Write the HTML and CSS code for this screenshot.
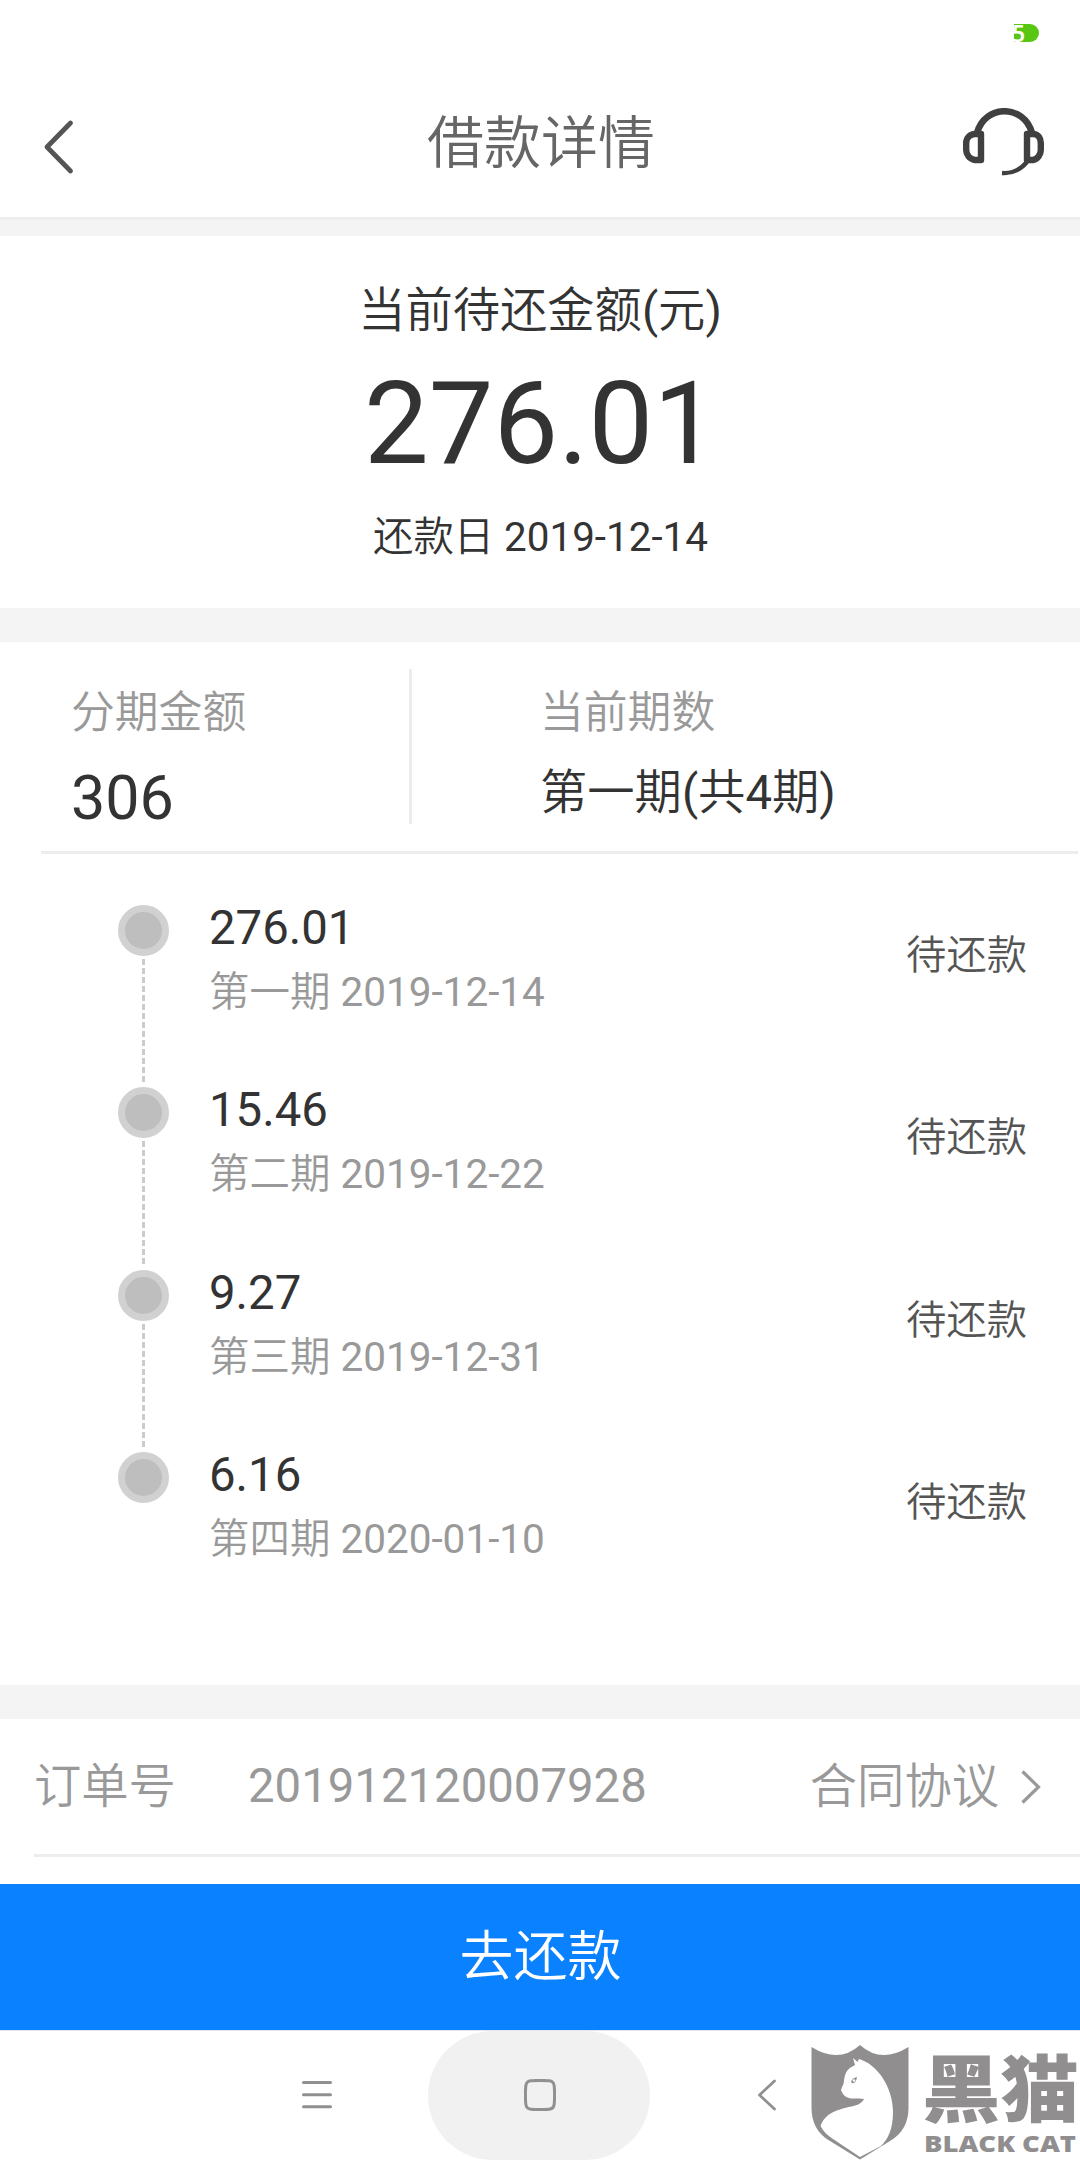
FILE: index.html
```
<!DOCTYPE html>
<html lang="zh-CN">

<head>
    <meta charset="UTF-8">
    <meta name="viewport" content="width=device-width, initial-scale=1.0">
    <title>借款详情</title>
    <link rel="stylesheet" href="styles.css">
</head>

<body>
    <div class="status-bar">
        <span class="battery">5</span>
    </div>

    <header class="header">
        <a href="#" class="back-link">
            <svg width="32" height="56" viewBox="0 0 32 56">
                <path d="M28.5 4 L5 28 L28.5 52" fill="none" stroke="#555" stroke-width="4.8" stroke-linecap="round" stroke-linejoin="round" />
            </svg>
        </a>
        <h1>借款详情</h1>
        <a href="#" class="service-link">
            <svg width="82" height="68" viewBox="0 0 82 68" fill="none" stroke="#404040">
                <path d="M14 25 C22 -4 61 -4 69 25" stroke-width="6.6" />
                <path d="M18 26 V52 H12 C6 51 3.2 46 3.2 42 V35 C3.2 30 7 26 12 26 Z" stroke-width="6.4" stroke-linejoin="round" />
                <path d="M64 26 V52 H70 C75 51 77.8 46 77.8 42 V35 C77.8 30 75 26 70 26 Z" stroke-width="6.4" stroke-linejoin="round" />
                <path d="M64 54 C57 62 49 66 39 65" stroke-width="4.4" />
            </svg>
        </a>
    </header>

    <section class="summary">
        <p class="summary-label">当前待还金额<span class="num">(</span>元<span class="num">)</span></p>
        <p class="summary-amount">276.01</p>
        <p class="summary-date">还款日 <span class="num">2019-12-14</span></p>
    </section>

    <section class="plan">
        <div class="plan-info">
            <div class="plan-total">
                <p class="plan-label">分期金额</p>
                <p class="plan-number">306</p>
            </div>
            <div class="plan-current">
                <p class="plan-label">当前期数</p>
                <p class="plan-value">第一期<span class="num">(</span>共<span class="num">4</span>期<span class="num">)</span></p>
            </div>
        </div>

        <ul class="timeline">
            <li class="timeline-item">
                <div class="marker"><i class="dot"></i><i class="dash"></i></div>
                <div class="detail">
                    <p class="amount">276.01</p>
                    <p class="date">第一期 <span class="num">2019-12-14</span></p>
                </div>
                <span class="state">待还款</span>
            </li>
            <li class="timeline-item">
                <div class="marker"><i class="dot"></i><i class="dash"></i></div>
                <div class="detail">
                    <p class="amount">15.46</p>
                    <p class="date">第二期 <span class="num">2019-12-22</span></p>
                </div>
                <span class="state">待还款</span>
            </li>
            <li class="timeline-item">
                <div class="marker"><i class="dot"></i><i class="dash"></i></div>
                <div class="detail">
                    <p class="amount">9.27</p>
                    <p class="date">第三期 <span class="num">2019-12-31</span></p>
                </div>
                <span class="state">待还款</span>
            </li>
            <li class="timeline-item">
                <div class="marker"><i class="dot"></i></div>
                <div class="detail">
                    <p class="amount">6.16</p>
                    <p class="date">第四期 <span class="num">2020-01-10</span></p>
                </div>
                <span class="state">待还款</span>
            </li>
        </ul>
    </section>

    <section class="order">
        <div class="order-row">
            <span class="order-label">订单号</span>
            <span class="order-number">201912120007928</span>
            <a href="#" class="contract">合同协议
                <svg width="20" height="34" viewBox="0 0 20 34">
                    <path d="M1.5 1.5 L17.5 17 L1.5 32.5" fill="none" stroke="#999" stroke-width="3.2" />
                </svg>
            </a>
        </div>
    </section>

    <button class="pay-btn">去还款</button>

    <nav class="system-nav">
        <span class="nav-key">
            <svg width="30" height="28" viewBox="0 0 30 28">
                <path d="M1.5 1.5 H28.5 M1.5 13.7 H28.5 M1.5 25.7 H28.5" stroke="#909090" stroke-width="3" stroke-linecap="round" />
            </svg>
        </span>
        <span class="nav-key home">
            <svg width="32" height="32" viewBox="0 0 32 32">
                <path d="M7 1.8 Q16 1 25 1.8 Q29.8 2.2 30.2 7 Q31 16 30.2 25 Q29.8 29.8 25 30.2 Q16 31 7 30.2 Q2.2 29.8 1.8 25 Q1 16 1.8 7 Q2.2 2.2 7 1.8 Z" fill="none" stroke="#909090" stroke-width="3" />
            </svg>
        </span>
        <span class="nav-key back">
            <svg width="20" height="32" viewBox="0 0 20 32">
                <path d="M17.5 2 L2.5 16 L17.5 30" fill="none" stroke="#909090" stroke-width="2.8" stroke-linecap="round" stroke-linejoin="round" />
            </svg>
        </span>
    </nav>

    <div class="watermark">
        <svg width="98" height="115" viewBox="0 0 98 115">
            <!-- shield -->
            <path d="M0.5 2 Q28 19 49 0 Q70 19 97.5 2 V63 C97.5 78 91 89 79 96 L49 114.5 L19 96 C7 89 0.5 78 0.5 63 Z" fill="#918e8f" />
            <!-- cat -->
            <path d="M42 13 L46.5 17 L48 14 C66 19 82 42 82 67 C82 84 77 94 70 101 L49 112 L22 94 C16 90 12 86 9.5 81 C16 62 42 63 48 59 C51 57 52 56 53 54 C47 53 40 54 38 53 C34 52 32 50 30 45 L31 42 C34 38 32 32 36 26 C39 22 43 21 44 20 Z" fill="#fff" />
            <path d="M40 37 Q41 33 46 32 Q45 39 41 38 Z" fill="#918e8f" />
            <circle cx="43" cy="35.5" r="1.3" fill="#fff" />
        </svg>
        <svg class="watermark-text" width="155" height="115" viewBox="0 0 155 115">
            <text class="watermark-cn" x="-1" y="71" textLength="157" lengthAdjust="spacingAndGlyphs">黑猫</text>
            <text class="watermark-en" x="1" y="107" textLength="152" lengthAdjust="spacingAndGlyphs">BLACK CAT</text>
        </svg>
    </div>
</body>

</html>
```
FILE: styles.css
```
* {
    margin: 0;
    padding: 0;
    box-sizing: border-box;
}

body {
    width: 1080px;
    height: 2160px;
    overflow: hidden;
    position: relative;
    display: flex;
    flex-direction: column;
    font-family: Roboto, "Noto Sans CJK SC", sans-serif;
    font-weight: 350;
    background-color: #f4f4f4;
    color: #333;
}

a {
    color: inherit;
    text-decoration: none;
}

svg {
    display: block;
}

.num,
.summary-amount,
.plan-number,
.amount,
.order-number {
    font-weight: 400;
}

/* Top */

.status-bar {
    height: 70px;
    padding: 24px 41px 0 0;
    display: flex;
    justify-content: flex-end;
    background-color: #fff;
}

.battery {
    width: 25px;
    height: 18px;
    border-radius: 0 9px 9px 0;
    background-color: #58c612;
    color: #fff;
    font-family: "Noto Sans", sans-serif;
    font-size: 23px;
    font-weight: 600;
    line-height: 18px;
    text-indent: -2px;
}

.header {
    height: 150px;
    padding: 0 35px 0 42px;
    display: grid;
    grid-template-columns: 100px 1fr 105px;
    background-color: #fff;
    border-bottom: 3px solid #ededed;
}

.back-link {
    padding-top: 49px;
}

.header h1 {
    padding-top: 39px;
    font-size: 57px;
    font-weight: 350;
    line-height: 70px;
    text-align: center;
    color: #666;
}

.service-link {
    padding-top: 38px;
    justify-self: end;
}

/* Amount due */

.summary {
    height: 372px;
    margin-top: 16px;
    padding-top: 47px;
    text-align: center;
    background-color: #fff;
}

.summary-label {
    font-size: 47.3px;
    line-height: 56px;
}

.summary-amount {
    margin-top: 25px;
    padding-left: 2px;
    font-size: 115.2px;
    line-height: 120px;
}

.summary-date {
    margin-top: 30px;
    padding-left: 1px;
    font-size: 40.4px;
    line-height: 48px;
}

/* Installment plan */

.plan {
    height: 1043px;
    margin-top: 34px;
    background-color: #fff;
}

.plan-info {
    height: 212px;
    margin: 0 2px 0 41px;
    padding-top: 27px;
    display: flex;
    align-items: flex-start;
    border-bottom: 3px solid #ededed;
}

.plan-total {
    width: 371px;
    height: 155px;
    padding: 18px 0 0 30px;
    border-right: 3px solid #ededed;
}

.plan-current {
    padding: 18px 0 0 128px;
}

.plan-label {
    font-size: 43.8px;
    line-height: 52px;
    color: #999;
}

.plan-number {
    margin-top: 24px;
    font-size: 61px;
    line-height: 70px;
}

.plan-value {
    margin-top: 26px;
    font-size: 47.3px;
    line-height: 56px;
}

.timeline {
    padding: 46px 53px 0 118px;
    list-style: none;
}

.timeline-item {
    height: 182.3px;
    display: flex;
}

.marker {
    width: 51px;
    margin-right: 40px;
    padding-top: 5px;
    display: flex;
    flex-direction: column;
    align-items: center;
}

.dot {
    width: 51px;
    height: 51px;
    border: 7px solid #d1d1d1;
    border-radius: 50%;
    background-color: #bebebe;
}

.dash {
    width: 3px;
    height: 123px;
    margin-top: 3px;
    background: repeating-linear-gradient(to bottom, #ccc 0, #ccc 6px, transparent 6px, transparent 9px);
}

.detail {
    flex: 1;
}

.amount {
    font-size: 47.3px;
    line-height: 56px;
}

.date {
    margin-top: 12px;
    font-size: 40.5px;
    line-height: 48px;
    color: #999;
}

.state {
    margin-top: 32px;
    font-size: 40.3px;
    line-height: 48px;
    color: #555;
}

/* Order */

.order {
    height: 165px;
    margin-top: 34px;
    padding-left: 34px;
    background-color: #fff;
}

.order-row {
    height: 138px;
    padding-right: 39px;
    display: flex;
    align-items: center;
    border-bottom: 3px solid #ededed;
    font-size: 47.3px;
    line-height: 56px;
    color: #999;
}

.order-label {
    width: 214px;
}

.order-number {
    padding-bottom: 1px;
}

.contract {
    margin-left: auto;
    display: flex;
    align-items: center;
    gap: 22px;
}

.pay-btn {
    height: 146px;
    padding: 2px 0 0 1px;
    border: none;
    background-color: #0a81ff;
    color: #fff;
    font-family: inherit;
    font-size: 54px;
    font-weight: 350;
    line-height: 64px;
}

/* System keys */

.system-nav {
    height: 130px;
    padding-left: 206px;
    display: flex;
    border-top: 1px solid #e4e6ea;
    background-color: #fff;
}

.nav-key {
    width: 222px;
    padding-bottom: 1px;
    display: flex;
    align-items: center;
    justify-content: center;
}

.home {
    padding-left: 2px;
    border-radius: 65px;
    background-color: #f1f1f1;
}

.back {
    width: 234px;
}

.watermark {
    position: absolute;
    left: 811px;
    bottom: 0;
    display: flex;
    gap: 14px;
}

.watermark-text {
    fill: #918e8f;
    overflow: visible;
}

.watermark-cn {
    font-family: "Noto Sans CJK SC", sans-serif;
    font-size: 73px;
    font-weight: 900;
}

.watermark-en {
    font-family: "Open Sans", sans-serif;
    font-size: 23px;
    font-weight: 800;
}
```
